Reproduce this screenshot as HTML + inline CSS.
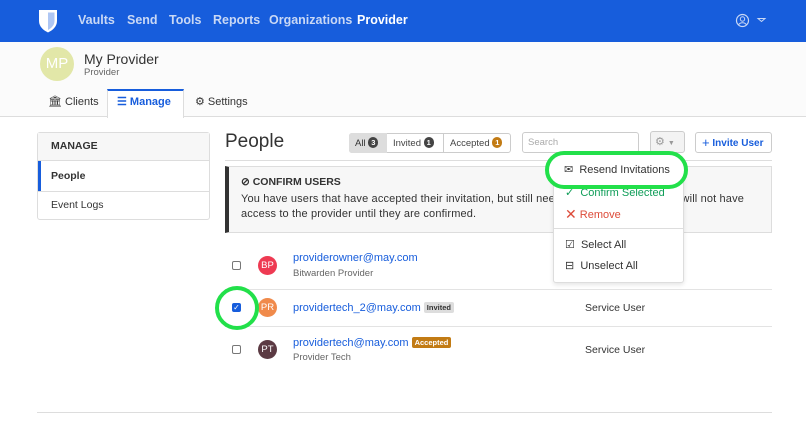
<!DOCTYPE html>
<html><head><style>
*{box-sizing:border-box;margin:0;padding:0}
body{width:806px;height:425px;overflow:hidden;background:#fff;font-family:"Liberation Sans",sans-serif;color:#333;position:relative;font-size:11px}
.a{position:absolute;white-space:nowrap}
.nav{position:absolute;left:0;top:0;width:806px;height:42px;background:#175ddc}
.nav .a{color:#c9d8f5;font-weight:bold;font-size:12.5px;top:13px}
.hdr{position:absolute;left:0;top:42px;width:806px;height:75px;background:#fbfbfb;border-bottom:1px solid #ddd}
.cb{position:absolute;width:9px;height:9px;border:1px solid #777;border-radius:2px;background:#fff}
.av{position:absolute;width:19px;height:19px;border-radius:50%;color:#fff;font-size:9.5px;text-align:center;line-height:19px}
.link{color:#175ddc;font-size:11px}
.sub{color:#666;font-size:9.5px}
.badge{display:inline-block;font-size:7.5px;font-weight:bold;border-radius:2px;padding:1px 3px;vertical-align:1px}
.dd .a{font-size:11px}
</style></head><body>
<div class="nav">
<svg class="a" style="left:38px;top:9px" width="20" height="24" viewBox="0 0 20 24"><path d="M1 1h18v11c0 6-5 9.5-9 11.5C6 21.5 1 18 1 12z" fill="#fff"/><path d="M10 3.5h6.5v8.5c0 4.5-3.5 7.3-6.5 9z" fill="#175ddc" opacity=".35"/></svg>
<span class="a" style="left:78px">Vaults</span>
<span class="a" style="left:127px">Send</span>
<span class="a" style="left:169px">Tools</span>
<span class="a" style="left:213px">Reports</span>
<span class="a" style="left:269px">Organizations</span>
<span class="a" style="left:357px;color:#fff">Provider</span>
<svg class="a" style="left:735px;top:13px" width="32" height="15"><circle cx="7.5" cy="7.5" r="6" fill="none" stroke="#c9d8f5" stroke-width="1.2"/><circle cx="7.5" cy="6" r="2.2" fill="none" stroke="#c9d8f5"/><path d="M3.5 12c1.5-3 6.5-3 8 0" fill="none" stroke="#c9d8f5"/><path d="M23 5.5h7l-3.5 3z" fill="none" stroke="#c9d8f5"/></svg>
</div>
<div class="hdr">
<div class="a" style="left:40px;top:5px;width:34px;height:34px;border-radius:50%;background:#e2e7a8;color:#fff;font-size:15px;text-align:center;line-height:34px">MP</div>
<span class="a" style="left:84px;top:9px;font-size:14px;color:#333">My Provider</span>
<span class="a" style="left:84px;top:25px;font-size:9.5px;color:#666">Provider</span>
<span class="a" style="left:48px;top:53px;font-size:11px;color:#333">🏛 Clients</span>
<div class="a" style="left:107px;top:47px;width:77px;height:29px;background:#fff;border:1px solid #ddd;border-top:2px solid #175ddc;border-bottom:none"></div>
<span class="a" style="left:117px;top:53px;font-size:11px;color:#175ddc;font-weight:bold">☰ Manage</span>
<span class="a" style="left:195px;top:53px;font-size:11px;color:#333">⚙ Settings</span>
</div>
<div class="a" style="left:37px;top:132px;width:173px;height:88px;border:1px solid #ddd;border-radius:3px;background:#fff"></div>
<div class="a" style="left:38px;top:133px;width:171px;height:28px;background:#f7f7f7;border-bottom:1px solid #ddd"></div>
<span class="a" style="left:51px;top:140px;font-weight:bold;font-size:10.5px">MANAGE</span>
<div class="a" style="left:38px;top:161px;width:3px;height:30px;background:#175ddc"></div>
<span class="a" style="left:51px;top:170px;font-weight:bold;font-size:10.5px">People</span>
<div class="a" style="left:38px;top:191px;width:171px;height:1px;background:#ddd"></div>
<span class="a" style="left:51px;top:199px;font-size:10.5px">Event Logs</span>
<span class="a" style="left:225px;top:131px;font-size:19px;color:#333">People</span>
<div class="a" style="left:349px;top:133px;width:162px;height:20px;border:1px solid #ccc;border-radius:3px;background:#fff"></div>
<div class="a" style="left:349px;top:133px;width:38px;height:20px;background:#ddd;border-radius:3px 0 0 3px"></div>
<div class="a" style="left:443px;top:133px;width:1px;height:20px;background:#ccc"></div>
<span class="a" style="left:355px;top:137px;font-size:9.5px;color:#333">All <span class="badge" style="background:#444;color:#fff;border-radius:6px">3</span></span>
<span class="a" style="left:393px;top:137px;font-size:9.5px;color:#444">Invited <span class="badge" style="background:#444;color:#fff;border-radius:6px">1</span></span>
<span class="a" style="left:450px;top:137px;font-size:9.5px;color:#444">Accepted <span class="badge" style="background:#c27b14;color:#fff;border-radius:6px">1</span></span>
<div class="a" style="left:522px;top:132px;width:117px;height:21px;border:1px solid #ccc;border-radius:3px"></div>
<span class="a" style="left:528px;top:137px;font-size:9.5px;color:#aaa">Search</span>
<div class="a" style="left:650px;top:131px;width:35px;height:22px;border:1px solid #ccc;border-radius:3px;background:#f3f3f3"></div>
<span class="a" style="left:655px;top:135px;font-size:11px;color:#999">⚙ <span style="font-size:7px">▼</span></span>
<div class="a" style="left:695px;top:132px;width:77px;height:21px;border:1px solid #ccc;border-radius:3px"></div>
<span class="a" style="left:702px;top:135px;font-size:10px;color:#175ddc;font-weight:bold"><span style="font-weight:normal;font-size:13px;vertical-align:-1px">+</span> Invite User</span>
<div class="a" style="left:225px;top:160px;width:547px;height:1px;background:#ddd"></div>
<div class="a" style="left:225px;top:166px;width:547px;height:67px;background:#f7f7f7;border:1px solid #ddd;border-left:4px solid #333"></div>
<span class="a" style="left:241px;top:176px;font-size:10.5px;font-weight:bold">⊘ CONFIRM USERS</span>
<span class="a" style="left:241px;top:193px;font-size:11px;letter-spacing:.15px">You have users that have accepted their invitation, but still need to be confirmed. Users will not have</span>
<span class="a" style="left:241px;top:208px;font-size:11px;letter-spacing:.15px">access to the provider until they are confirmed.</span>
<div class="cb" style="left:232px;top:261px"></div>
<div class="av" style="left:258px;top:256px;background:#ee3a52">BP</div>
<span class="a link" style="left:293px;top:252px">providerowner@may.com</span>
<span class="a sub" style="left:293px;top:268px">Bitwarden Provider</span>
<div class="a" style="left:225px;top:289px;width:547px;height:1px;background:#e3e3e3"></div>
<div class="cb" style="left:232px;top:303px;background:#175ddc;border-color:#175ddc;color:#fff;font-size:8px;line-height:8px;text-align:center">✓</div>
<div class="av" style="left:258px;top:298px;background:#f08a4b">PR</div>
<span class="a link" style="left:293px;top:302px">providertech_2@may.com <span class="badge" style="background:#ddd;color:#333">Invited</span></span>
<span class="a" style="left:585px;top:302px;font-size:10.5px">Service User</span>
<div class="a" style="left:225px;top:326px;width:547px;height:1px;background:#e3e3e3"></div>
<div class="cb" style="left:232px;top:345px"></div>
<div class="av" style="left:258px;top:340px;background:#5b3a43">PT</div>
<span class="a link" style="left:293px;top:337px">providertech@may.com <span class="badge" style="background:#c27b14;color:#fff">Accepted</span></span>
<span class="a sub" style="left:293px;top:352px">Provider Tech</span>
<span class="a" style="left:585px;top:344px;font-size:10.5px">Service User</span>
<div class="a" style="left:37px;top:412px;width:735px;height:1px;background:#ddd"></div>
<div class="a dd" style="left:553px;top:157px;width:131px;height:126px;background:#fff;border:1px solid #ddd;border-radius:3px;box-shadow:0 2px 4px rgba(0,0,0,.1)">
<span class="a" style="left:11px;top:7px;color:#333">✉&nbsp; Resend Invitations</span>
<span class="a" style="left:11px;top:28px;color:#0f9d58">✓&nbsp; Confirm Selected</span>
<span class="a" style="left:11px;top:48px;color:#dd4b39"><span style="font-size:14px;vertical-align:-1px">✕</span>&nbsp;Remove</span>
<div class="a" style="left:0;top:70px;width:129px;height:1px;background:#ddd"></div>
<span class="a" style="left:11px;top:80px;color:#333">☑&nbsp; Select All</span>
<span class="a" style="left:11px;top:101px;color:#333">⊟&nbsp; Unselect All</span>
</div>
<div class="a" style="left:545px;top:151px;width:143px;height:38px;border-radius:19px;background:#fff;border:4px solid #22e04a"></div>
<span class="a" style="left:564px;top:163px;font-size:11px;color:#333">✉&nbsp; Resend Invitations</span>
<div class="a" style="left:215px;top:286px;width:44px;height:44px;border:4px solid #22e04a;border-radius:50%"></div>
</body></html>
